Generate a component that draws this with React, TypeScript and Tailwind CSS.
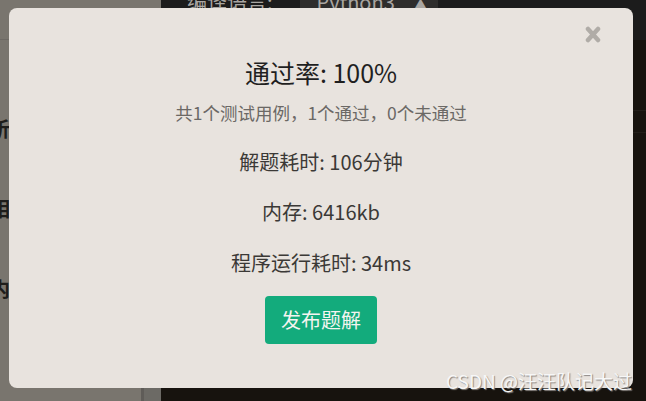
import React from "react";

const font = { fontFamily: '"Noto Sans CJK SC", "Noto Sans", sans-serif' };

function CloseIcon() {
  return (
    <svg width="16" height="17" viewBox="0 0 16 17" className="block">
      <path
        d="M3 3 L13 14 M13 3 L3 14"
        stroke="#b0aca7"
        strokeWidth="4.5"
        strokeLinecap="round"
      />
    </svg>
  );
}

function ResultDialog() {
  return (
    <div className="absolute left-[9px] top-[8px] flex h-[380px] w-[624px] flex-col items-center rounded-[8px] bg-[#e8e3de] pt-[49px]">
      <button className="absolute right-[32px] top-[18px]">
        <CloseIcon />
      </button>
      <h3 className="h-[30px] text-[25px] leading-[30px] text-[#1f1f1f]">
        通过率: 100%
      </h3>
      <p className="mt-[14px] h-[24px] text-[17.5px] leading-[24px] text-[#6b6865]">
        共1个测试用例，1个通过，0个未通过
      </p>
      <p className="mt-[23px] h-[28px] text-[20px] leading-[28px] text-[#3b3936]">
        解题耗时: 106分钟
      </p>
      <p className="mt-[22px] h-[28px] text-[20px] leading-[28px] text-[#3b3936]">
        内存: 6416kb
      </p>
      <p className="mt-[23px] h-[28px] text-[20px] leading-[28px] text-[#3b3936]">
        程序运行耗时: 34ms
      </p>
      <button className="mt-[19px] flex h-[48px] w-[112px] items-center justify-center rounded-[4px] bg-[#13ab7c] text-[20px] text-[#f4f4f0]">
        发布题解
      </button>
    </div>
  );
}

export default function App() {
  return (
    <div className="relative h-[401px] w-[646px] overflow-hidden" style={font}>
      <div className="flex h-full">
        {/* left panel behind the overlay */}
        <div className="flex w-[161px] flex-col bg-[#79756e]">
          <div className="h-[40px] border-b border-[#6d6964]" />
          <div className="flex flex-1 flex-col pt-[75px] text-[20px] font-bold leading-[28px] text-[#1e1d1b]">
            <span className="-ml-[10px]">析</span>
            <span className="-ml-[10px] mt-[52px]">相</span>
            <span className="-ml-[10px] mt-[52px]">内</span>
          </div>
          <div className="flex h-[13px]">
            <div className="w-[141px]" />
            <div className="w-[3px] bg-[#5f5c58]" />
            <div className="flex-1 bg-[#6c6a65]" />
          </div>
        </div>
        {/* editor side */}
        <div className="flex flex-1 flex-col bg-[#17130e]">
          <div className="flex h-[40px] items-start bg-[#1c1c1c] pl-[26px] text-[20px] leading-[20px] text-[#a9a6a2]">
            <span className="-mt-[8px]">编译语言:</span>
            <div className="ml-[27px] flex h-[40px] w-[138px] items-start justify-between bg-[#2e2d2c] pl-[17px] pr-[10px]">
              <span className="-mt-[8px]">Python3</span>
              <span className="-mt-[6px] text-[14px]">▲</span>
            </div>
          </div>
          <div className="mt-[70px] h-px bg-[#221e19]" />
          <div className="mt-[21px] h-px bg-[#221e19]" />
        </div>
      </div>
      <ResultDialog />
      <div
        className="absolute bottom-[9px] right-[14px] text-[19px] leading-[22px] text-[#f7f7f7]"
        style={{ textShadow: "1px 1px 1px #8a8683" }}
      >
        CSDN @汪汪队记大过
      </div>
    </div>
  );
}
